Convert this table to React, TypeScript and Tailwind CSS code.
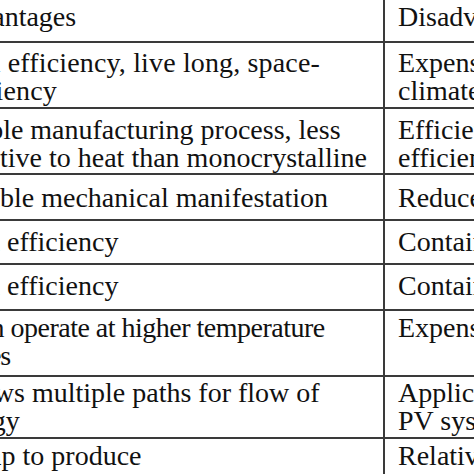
import React from "react";

type Row = { left: string[]; right: string[]; h: string; pt: string; lt?: string; l2?: string };

const rows: Row[] = [
  { left: ["High efficiency, live long, space-", "efficiency"], right: ["Expensive, sensitive to", "climate change"], h: "h-[66px]", pt: "pt-[6px]", lt: "tracking-[0.15px]" },
  { left: ["Simple manufacturing process, less", "sensitive to heat than monocrystalline"], right: ["Efficiency is less than", "efficiency of monocrystalline"], h: "h-[66px]", pt: "pt-[7px]" },
  { left: ["Durable mechanical manifestation"], right: ["Reduced efficiency"], h: "h-[46px]", pt: "pt-[9px]" },
  { left: ["High efficiency"], right: ["Contains toxic materials"], h: "h-[44px]", pt: "pt-[7px]" },
  { left: ["High efficiency"], right: ["Contains toxic materials"], h: "h-[46px]", pt: "pt-[7px]" },
  { left: ["It can operate at higher temperature", "ranges"], right: ["Expensive"], h: "h-[66px]", pt: "pt-[3px]", lt: "tracking-[-0.5px]", l2: "tracking-[-1.2px]" },
  { left: ["Allows multiple paths for flow of", "energy"], right: ["Applicable only in large", "PV systems"], h: "h-[62px]", pt: "pt-[2px]" },
  { left: ["Cheap to produce"], right: ["Relatively low efficiency"], h: "h-[60px]", pt: "pt-[3px]" },
];

export default function App() {
  return (
    <div
      className="w-[474px] h-[474px] overflow-hidden bg-white text-[#111] text-[28px] leading-[28px] [font-variant-ligatures:none]"
      style={{ fontFamily: '"Liberation Serif", "Times New Roman", serif' }}
    >
      <div className="-ml-[62px] w-[760px] flex flex-col">
        <div className="flex h-[43px] border-b-2 border-[#3a3a3a]">
          <div className="w-[445px] shrink-0 pl-[6px] pt-[3px] whitespace-nowrap">Advantages</div>
          <div className="flex-1 border-l-2 border-[#3a3a3a] pl-[13px] pt-[3px] whitespace-nowrap">Disadvantages</div>
        </div>
        {rows.map((r, i) => (
          <div key={i} className={`flex ${r.h} border-b-2 border-[#3a3a3a]`}>
            <div className={`w-[445px] shrink-0 pl-[6px] ${r.pt} ${r.lt ?? ""} flex flex-col`}>
              {r.left.map((l, j) => (
                <span key={j} className={`whitespace-nowrap ${j === 1 && r.l2 ? r.l2 : ""}`}>{l}</span>
              ))}
            </div>
            <div className={`flex-1 border-l-2 border-[#3a3a3a] pl-[13px] ${r.pt} flex flex-col`}>
              {r.right.map((l, j) => (
                <span key={j} className="whitespace-nowrap">{l}</span>
              ))}
            </div>
          </div>
        ))}
      </div>
    </div>
  );
}
